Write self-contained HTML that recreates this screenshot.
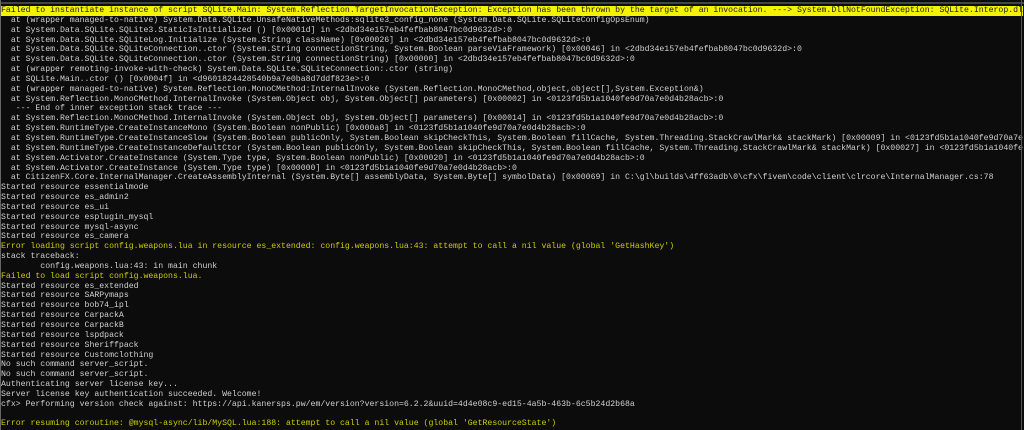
<!DOCTYPE html>
<html><head><meta charset="utf-8"><style>
html,body{margin:0;padding:0;background:#0c0c0c;width:1024px;height:430px;overflow:hidden}
#c{position:absolute;left:0;top:6px;width:1023px;height:424px;overflow:hidden;font-family:"Liberation Mono",monospace;font-size:8.2px;line-height:9.85px;color:#d0d0d0;white-space:pre}
#c div{height:9.85px;padding-left:1px}
.y{color:#cccc00}
.h{background:#f5f200;color:#1a1a1a}
#rb{position:absolute;right:2px;top:0;width:1px;height:430px;background:#555}
#lb{position:absolute;left:0;top:0;width:1px;height:430px;background:#666}
#tb{position:absolute;left:0;top:2px;width:1024px;height:2px;background:#444}
</style></head><body>
<div id="tb"></div>
<div id="c"><div class="h">Failed to instantiate instance of script SQLite.Main: System.Reflection.TargetInvocationException: Exception has been thrown by the target of an invocation. ---&gt; System.DllNotFoundException: SQLite.Interop.dll</div><div>  at (wrapper managed-to-native) System.Data.SQLite.UnsafeNativeMethods:sqlite3_config_none (System.Data.SQLite.SQLiteConfigOpsEnum)</div><div>  at System.Data.SQLite.SQLite3.StaticIsInitialized () [0x0001d] in &lt;2dbd34e157eb4fefbab8047bc0d9632d&gt;:0</div><div>  at System.Data.SQLite.SQLiteLog.Initialize (System.String className) [0x00026] in &lt;2dbd34e157eb4fefbab8047bc0d9632d&gt;:0</div><div>  at System.Data.SQLite.SQLiteConnection..ctor (System.String connectionString, System.Boolean parseViaFramework) [0x00046] in &lt;2dbd34e157eb4fefbab8047bc0d9632d&gt;:0</div><div>  at System.Data.SQLite.SQLiteConnection..ctor (System.String connectionString) [0x00000] in &lt;2dbd34e157eb4fefbab8047bc0d9632d&gt;:0</div><div>  at (wrapper remoting-invoke-with-check) System.Data.SQLite.SQLiteConnection:.ctor (string)</div><div>  at SQLite.Main..ctor () [0x0004f] in &lt;d9601824428540b9a7e0ba8d7ddf823e&gt;:0</div><div>  at (wrapper managed-to-native) System.Reflection.MonoCMethod:InternalInvoke (System.Reflection.MonoCMethod,object,object[],System.Exception&amp;)</div><div>  at System.Reflection.MonoCMethod.InternalInvoke (System.Object obj, System.Object[] parameters) [0x00002] in &lt;0123fd5b1a1040fe9d70a7e0d4b28acb&gt;:0</div><div>   --- End of inner exception stack trace ---</div><div>  at System.Reflection.MonoCMethod.InternalInvoke (System.Object obj, System.Object[] parameters) [0x00014] in &lt;0123fd5b1a1040fe9d70a7e0d4b28acb&gt;:0</div><div>  at System.RuntimeType.CreateInstanceMono (System.Boolean nonPublic) [0x000a8] in &lt;0123fd5b1a1040fe9d70a7e0d4b28acb&gt;:0</div><div>  at System.RuntimeType.CreateInstanceSlow (System.Boolean publicOnly, System.Boolean skipCheckThis, System.Boolean fillCache, System.Threading.StackCrawlMark&amp; stackMark) [0x00009] in &lt;0123fd5b1a1040fe9d70a7e0d4b28acb&gt;:0</div><div>  at System.RuntimeType.CreateInstanceDefaultCtor (System.Boolean publicOnly, System.Boolean skipCheckThis, System.Boolean fillCache, System.Threading.StackCrawlMark&amp; stackMark) [0x00027] in &lt;0123fd5b1a1040fe9d70a7e0d4b28acb&gt;:0</div><div>  at System.Activator.CreateInstance (System.Type type, System.Boolean nonPublic) [0x00020] in &lt;0123fd5b1a1040fe9d70a7e0d4b28acb&gt;:0</div><div>  at System.Activator.CreateInstance (System.Type type) [0x00000] in &lt;0123fd5b1a1040fe9d70a7e0d4b28acb&gt;:0</div><div>  at CitizenFX.Core.InternalManager.CreateAssemblyInternal (System.Byte[] assemblyData, System.Byte[] symbolData) [0x00069] in C:\gl\builds\4ff63adb\0\cfx\fivem\code\client\clrcore\InternalManager.cs:78</div><div>Started resource essentialmode</div><div>Started resource es_admin2</div><div>Started resource es_ui</div><div>Started resource esplugin_mysql</div><div>Started resource mysql-async</div><div>Started resource es_camera</div><div class="y">Error loading script config.weapons.lua in resource es_extended: config.weapons.lua:43: attempt to call a nil value (global 'GetHashKey')</div><div>stack traceback:</div><div>        config.weapons.lua:43: in main chunk</div><div class="y">Failed to load script config.weapons.lua.</div><div>Started resource es_extended</div><div>Started resource SARPymaps</div><div>Started resource bob74_ipl</div><div>Started resource CarpackA</div><div>Started resource CarpackB</div><div>Started resource lspdpack</div><div>Started resource Sheriffpack</div><div>Started resource Customclothing</div><div>No such command server_script.</div><div>No such command server_script.</div><div>Authenticating server license key...</div><div>Server license key authentication succeeded. Welcome!</div><div>cfx&gt; Performing version check against: https://api.kanersps.pw/em/version?version=6.2.2&amp;uuid=4d4e08c9-ed15-4a5b-463b-6c5b24d2b68a</div><div> </div><div class="y">Error resuming coroutine: @mysql-async/lib/MySQL.lua:188: attempt to call a nil value (global 'GetResourceState')</div></div>
<div id="lb"></div><div id="rb"></div>
</body></html>
